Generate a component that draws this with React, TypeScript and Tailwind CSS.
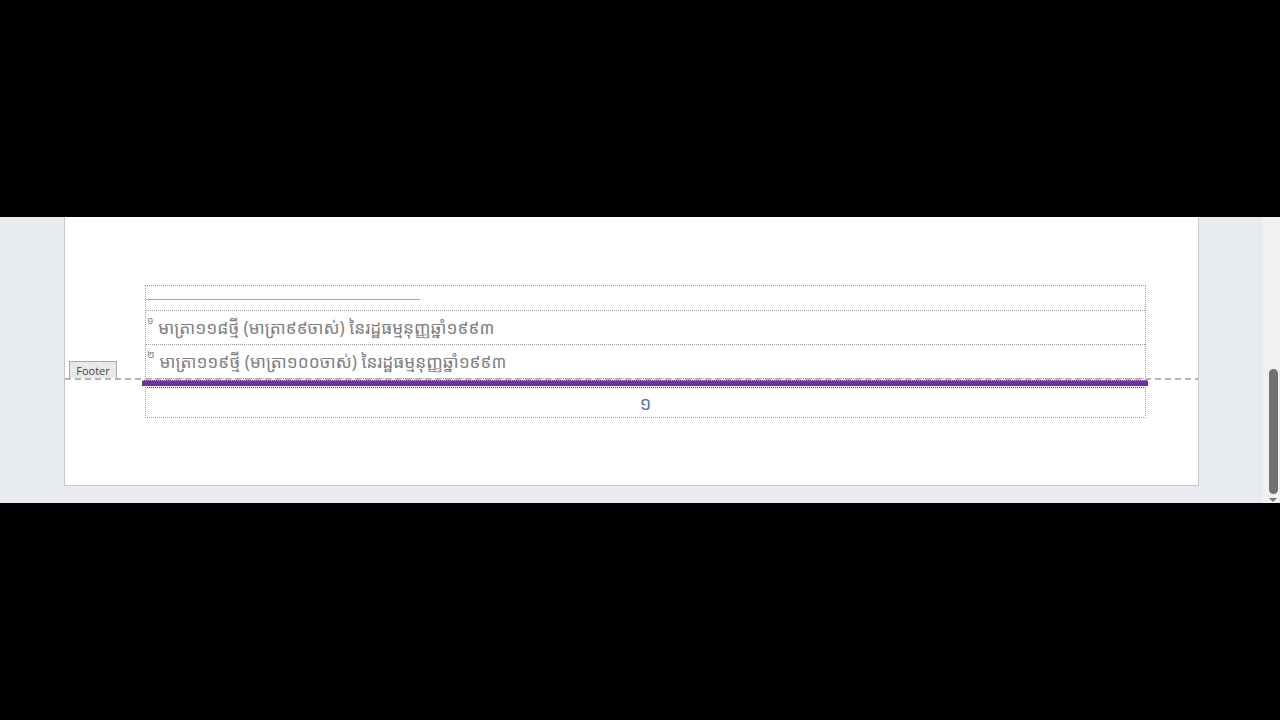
import React from "react";

const khmer = { fontFamily: '"Noto Sans Khmer", "Khmer OS", "Khmer OS System", "Noto Sans", "DejaVu Sans", sans-serif' };

export default function App() {
  return (
    <div className="w-[1280px] h-[720px] bg-black flex flex-col overflow-hidden">
      <div className="h-[217px] shrink-0 bg-black" />
      <div className="h-[286px] shrink-0 flex">
        <div className="flex-1 bg-[#e8ebef]">
          <div className="ml-[64px] w-[1135px] h-[269px] bg-white border-l border-r border-b border-[#c8c8c8] flex flex-col">
            <div className="h-[68px] shrink-0" />
            {/* footnote area */}
            <div className="ml-[80px] w-[1001px] border border-dotted border-[#9c9c9c]">
              <div className="h-[24px] flex flex-col">
                <div className="h-[13px]" />
                <div className="w-[274px] h-px bg-[#a8a8a8]" />
              </div>
              <div className="h-[34px] border-t border-dotted border-[#9c9c9c] flex items-center text-[#7f7f7f]" style={khmer}>
                <span className="text-[10px] self-start mt-[4px] ml-[1px] leading-none">១</span>
                <span className="text-[17.3px] ml-[5px] leading-none">មាត្រា១១៨ថ្មី (មាត្រា៩៩ចាស់) នៃរដ្ឋធម្មនុញ្ញឆ្នាំ១៩៩៣</span>
              </div>
              <div className="h-[34px] border-t border-dotted border-[#9c9c9c] flex items-center text-[#7f7f7f]" style={khmer}>
                <span className="text-[10px] self-start mt-[4px] ml-[1px] leading-none">២</span>
                <span className="text-[17.3px] ml-[5px] leading-none">មាត្រា១១៩ថ្មី (មាត្រា១០០ចាស់) នៃរដ្ឋធម្មនុញ្ញឆ្នាំ១៩៩៣</span>
              </div>
            </div>
            {/* footer boundary */}
            <div className="relative h-[2px] -mt-[1px] bg-[linear-gradient(to_right,#b4b4b4_60%,transparent_60%)] bg-[length:10px_2px] bg-repeat-x">
              <div
                className="absolute left-[4px] bottom-[2px] h-[17px] w-[48px] bg-[#e9e9e9] border border-b-0 border-[#a9a9a9] flex items-center justify-center text-[11px] text-[#444] leading-none"
                style={{ fontFamily: '"Segoe UI", "Open Sans", "DejaVu Sans", sans-serif' }}
              >
                Footer
              </div>
            </div>
            <div className="ml-[77px] w-[1006px]">
              <div className="h-[6px] bg-[#7030a0] border-t border-dotted border-[#b9a3cc]" />
              <div className="h-[1px]" />
              <div className="ml-[3px] w-[1001px] h-[31px] border-t border-[#6a2d8f] border-l border-r border-b border-l-[#9c9c9c] border-r-[#9c9c9c] border-b-[#9c9c9c] border-dotted flex items-center justify-center">
                <span className="text-[18px] text-[#5474a6] leading-none" style={khmer}>១</span>
              </div>
            </div>
          </div>
        </div>
        <div className="w-[17px] shrink-0 bg-[#f1f1f1] flex flex-col items-center">
          <div className="h-[152px]" />
          <div className="w-[9px] h-[125px] rounded-full bg-[#727272] ml-[3px]" />
          <div className="mt-[4px] ml-[3px] w-0 h-0 border-l-[4px] border-r-[4px] border-t-[4px] border-l-transparent border-r-transparent border-t-[#777]" />
        </div>
      </div>
      <div className="flex-1 bg-black" />
    </div>
  );
}
